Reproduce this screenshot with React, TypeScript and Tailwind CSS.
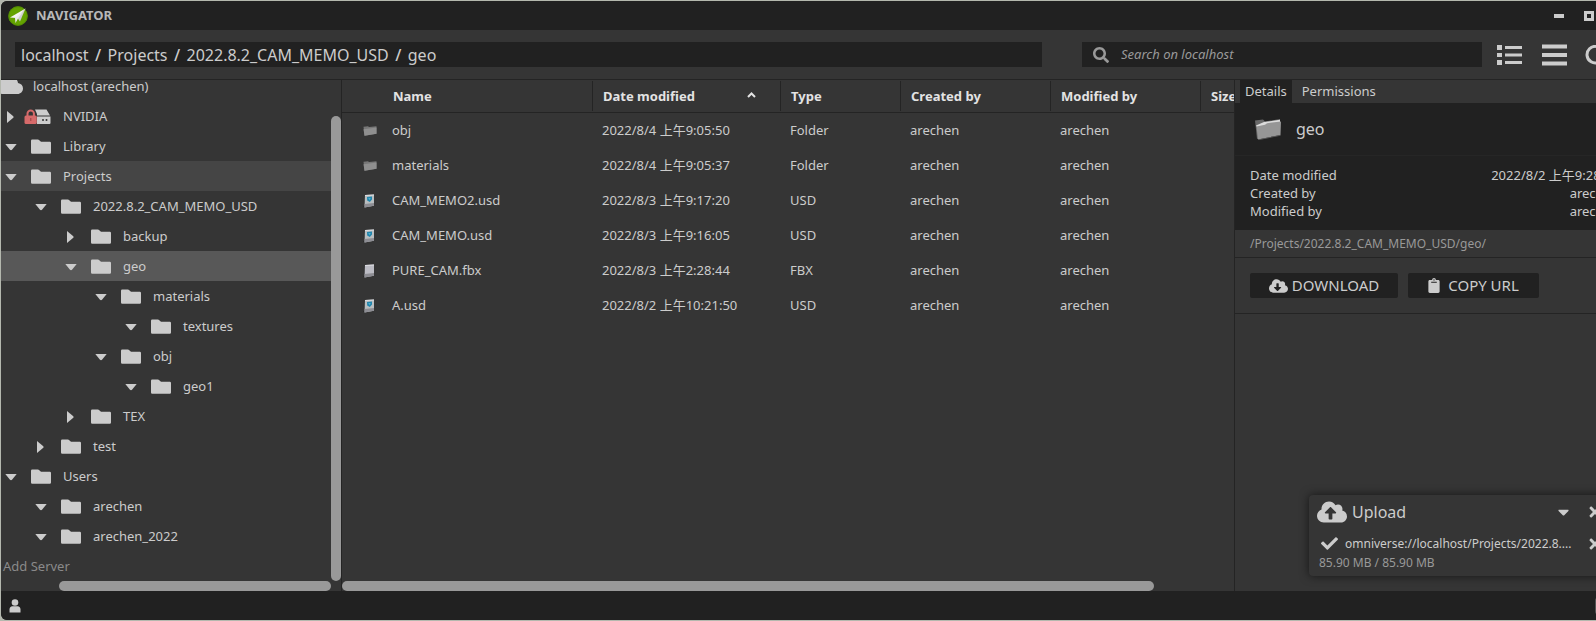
import type { ReactNode } from "react";
import { FaCaretDown, FaCheck, FaClipboard, FaCloudDownloadAlt, FaCloudUploadAlt, FaSearch, FaTimes } from "react-icons/fa";

type TreeNode = { name: string; level: number; open: boolean; icon?: "server"; state?: "hover" | "selected" };
type FileKind = "folder" | "usd" | "fbx";

const tree: TreeNode[] = [
  { name: "NVIDIA", level: 0, open: false, icon: "server" },
  { name: "Library", level: 0, open: true },
  { name: "Projects", level: 0, open: true, state: "hover" },
  { name: "2022.8.2_CAM_MEMO_USD", level: 1, open: true },
  { name: "backup", level: 2, open: false },
  { name: "geo", level: 2, open: true, state: "selected" },
  { name: "materials", level: 3, open: true },
  { name: "textures", level: 4, open: true },
  { name: "obj", level: 3, open: true },
  { name: "geo1", level: 4, open: true },
  { name: "TEX", level: 2, open: false },
  { name: "test", level: 1, open: false },
  { name: "Users", level: 0, open: true },
  { name: "arechen", level: 1, open: true },
  { name: "arechen_2022", level: 1, open: true }
];

const indents = ["pl-[3px]", "pl-[33px]", "pl-[63px]", "pl-[93px]", "pl-[123px]"];

const files: { name: string; kind: FileKind; date: string; type: string }[] = [
  { name: "obj", kind: "folder", date: "2022/8/4 上午9:05:50", type: "Folder" },
  { name: "materials", kind: "folder", date: "2022/8/4 上午9:05:37", type: "Folder" },
  { name: "CAM_MEMO2.usd", kind: "usd", date: "2022/8/3 上午9:17:20", type: "USD" },
  { name: "CAM_MEMO.usd", kind: "usd", date: "2022/8/3 上午9:16:05", type: "USD" },
  { name: "PURE_CAM.fbx", kind: "fbx", date: "2022/8/3 上午2:28:44", type: "FBX" },
  { name: "A.usd", kind: "usd", date: "2022/8/2 上午10:21:50", type: "USD" }
];

const crumbs = ["localhost", "Projects", "2022.8.2_CAM_MEMO_USD", "geo"];

const details = [
  ["Date modified", "2022/8/2 上午9:28:44"],
  ["Created by", "arechen"],
  ["Modified by", "arechen"]
];

function Logo() {
  return (
    <svg className="h-5 w-5" viewBox="0 0 20 20" aria-hidden="true">
      <circle cx="10" cy="10" r="9.7" fill="#64a300" />
      <circle cx="10" cy="10" r="9.3" fill="none" stroke="#4f8606" strokeWidth="0.8" />
      <path d="M17.5 2.500 2 11.500l6.500.5z" fill="#f4f4f4" />
      <path d="M17.500 2.500 9.500 12l2.500 3.500z" fill="#cfcfcf" />
      <path d="M17.500 2.500 7 11.900 7.500 17l2.500-4.500z" fill="#ececec" />
    </svg>
  );
}

function Arrow({ open }: { open: boolean }) {
  return (
    <svg className="h-4 w-4 shrink-0" viewBox="0 0 16 16" fill="#ccc" aria-hidden="true">
      {open ? <path d="M1.3 5h11.4L8 10.800c-.5.6-1.500.6-2 0z" /> : <path d="M3 2v12l6.300-5.300c.4-.4.4-1 0-1.400z" />}
    </svg>
  );
}

function FolderIcon() {
  return (
    <svg className="h-4 w-5 shrink-0" viewBox="0 0 20 16" fill="#ccc" aria-hidden="true">
      <path d="M1.200.500H7l1 .500 2 1.700h8.800A1.200 1.200 0 0 1 20 3.900v9.700a1.200 1.200 0 0 1-1.200 1.200H1.200A1.200 1.200 0 0 1 0 13.600V1.700A1.200 1.200 0 0 1 1.200.5z" />
    </svg>
  );
}

function LockedServerIcon() {
  return (
    <svg className="h-4 w-[27px] shrink-0" viewBox="0 0 27 16" aria-hidden="true">
      <path d="M11 .500h11.500L26 6.500H13V5z" fill="#ccc" />
      <path d="M13 7.500h13.500V14a1 1 0 0 1-1 1H13z" fill="#ccc" />
      <circle cx="19" cy="11" r="1" fill="#333" />
      <circle cx="22.500" cy="11" r="1" fill="#333" />
      <path d="M3.500 7.500V4.600a3.200 3.200 0 0 1 6.400 0V7.500" fill="none" stroke="#d66a6a" strokeWidth="2" />
      <rect x="0.500" y="6.500" width="12.300" height="8.500" rx="1.500" fill="#d66a6a" />
      <path d="M6.700 9v3" stroke="#a94d4d" strokeWidth="1.400" />
    </svg>
  );
}

function FolderShape() {
  return (
    <>
      <path d="M1 2.500 9 1.500l2 2L26 1v14L3 21z" fill="#696969" />
      <path d="M2 7.500 10 4l16-2.200V6L4 11z" fill="#dcdcdc" />
      <path d="M2.500 8.500 11 6.800l2-1.600L27 3.500 26.500 17 4 21.500z" fill="#969696" />
      <path d="m4 21.500 22.500-4.500v.8L5 22z" fill="#606060" />
    </>
  );
}

function FileIcon({ kind }: { kind: FileKind }) {
  if (kind === "folder") {
    return (
      <svg className="h-3 w-[14px]" viewBox="0 0 28 23" aria-hidden="true">
        <path d="M1 3 10 2l2 1.500L27 2v15L3 21z" fill="#777" />
        <path d="M1 8 27 4.500V17L3 21z" fill="#8f8f8f" />
      </svg>
    );
  }
  return (
    <svg className="h-[14px] w-3" viewBox="0 0 12 14" aria-hidden="true">
      <path d="M0 12.500 2 11v2.500z" fill="#222" />
      <path d="M2 1 11 .500v11.300L1.500 13.500z" fill={kind === "usd" ? "#b9bec0" : "#bcbcc4"} />
      <path d="M2 1 11 .500v1L2 2z" fill="#dedee2" />
      <path d="m1.600 10 9.400-1v2.800l-9.500 1.700z" fill="#8d8d93" />
      {kind === "usd" && <path d="m4 3 5-.400v3L6.800 8 4.200 6.500z" fill="#2186ad" />}
      {kind === "usd" && <path d="m5.200 3.800 2.600.600-1.300 1.500z" fill="#5ab8d8" />}
    </svg>
  );
}

function HeaderCell({ children, sorted }: { children: ReactNode; sorted?: boolean }) {
  return (
    <th scope="col" aria-sort={sorted ? "descending" : undefined} className="h-8 p-0 py-px text-left">
      <button type="button" className="flex h-[30px] w-full items-center justify-between border-r border-[#242424] pt-px pr-6 pl-[10px] font-bold whitespace-nowrap text-[#e3e3e3]">
        {children}
        {sorted && (
          <svg className="mb-1 h-[6px] w-[9px]" viewBox="0 0 9 6" fill="none" stroke="#e3e3e3" strokeWidth="2" aria-hidden="true">
            <path d="m1 5 3.500-3.500L8 5" />
          </svg>
        )}
      </button>
    </th>
  );
}

function TitleBar() {
  return (
    <header className="flex h-[29px] shrink-0 items-center rounded-tl-md bg-[#212121] pl-[7px]">
      <Logo />
      <h1 className="ml-2 flex-1 pt-px text-[13px] font-bold text-[#b8b8b8]">NAVIGATOR</h1>
      <button type="button" aria-label="Minimize" className="mr-5 w-[10px] py-1">
        <span className="block h-1 bg-[#ccc]" />
      </button>
      <button type="button" aria-label="Maximize" className="mr-5 h-[10px] w-[10px] border-[3px] border-[#ccc]" />
      <button type="button" aria-label="Close" className="mr-2 text-xs text-[#ccc]"><FaTimes /></button>
    </header>
  );
}

function Toolbar() {
  return (
    <div className="flex h-[50px] shrink-0 items-center border-b border-[#242424] pr-[27px] pl-[14px]">
      <nav aria-label="Path" className="flex h-[25px] flex-1 items-center bg-[#212121] pl-[6px] text-base">
        {crumbs.map((crumb, i) => (
          <span key={crumb} className="flex">
            {i > 0 && <span className="w-[19px] text-center font-medium">/</span>}
            <a href="#">{crumb}</a>
          </span>
        ))}
      </nav>
      <label className="ml-10 flex h-[25px] w-[400px] items-center gap-3 bg-[#212121] pl-[11px]">
        <FaSearch className="h-4 w-4 text-[#999]" />
        <input type="text" aria-label="Search" placeholder="Search on localhost" className="flex-1 bg-transparent pt-px text-[13px] italic outline-none placeholder:text-[#999]" />
      </label>
      <div className="ml-[15px] flex items-center">
        <button type="button" aria-label="List view" className="mr-5">
          <svg className="h-5 w-[25px]" viewBox="0 0 25 20" fill="#ccc" aria-hidden="true">
            <path d="M0 0h5v5H0zM0 8h5v4H0zM0 15h5v5H0zM8 1h17v3H8zM8 8.500h17v3H8zM8 16h17v3H8z" />
          </svg>
        </button>
        <button type="button" aria-label="Menu" className="mr-[18px]">
          <svg className="h-[22px] w-[25px]" viewBox="0 0 25 22" fill="#ccc" aria-hidden="true">
            <path d="M0 .500h25v4H0zM0 9h25v4H0zM0 17.500h25v4H0z" />
          </svg>
        </button>
        <button type="button" aria-label="Refresh">
          <svg className="h-5 w-[22px]" viewBox="0 0 22 20" fill="none" stroke="#ccc" strokeWidth="3" aria-hidden="true">
            <path d="M17.500 5.500A8.300 8.300 0 1 0 18.300 12" />
            <path d="M19 1v6h-6" />
          </svg>
        </button>
      </div>
    </div>
  );
}

function Sidebar() {
  return (
    <aside className="flex w-[341px] shrink-0 flex-col border-r border-[#242424]">
      <div className="flex min-h-0 flex-1">
        <div className="min-w-0 flex-1 overflow-hidden">
          <ul className="-mt-[9px]">
            <li>
              <button type="button" className="flex h-[30px] w-full items-center gap-[10px] pt-[2px] text-left">
                <svg className="h-4 w-[22px]" viewBox="0 0 22 16" fill="#ccc" aria-hidden="true">
                  <path d="M-3 4C-2 1 2-1 6-1h6c3 0 4.500 2 5 5 3 .5 5 2.500 5 5.500S19.500 15 16.500 15H2C-1 15-3 13.500-3 11z" />
                </svg>
                localhost (arechen)
              </button>
            </li>
            {tree.map((node) => (
              <li key={node.name} className={node.state === "selected" ? "bg-[#585858]" : node.state === "hover" ? "bg-[#454545]" : ""}>
                <button type="button" className={`flex h-[30px] w-full items-center pt-[2px] text-left ${indents[node.level]}`}>
                  <Arrow open={node.open} />
                  <span className="mr-3 flex w-[31px] shrink-0 justify-end">{node.icon === "server" ? <LockedServerIcon /> : <FolderIcon />}</span>
                  {node.name}
                </button>
              </li>
            ))}
            <li>
              <button type="button" className="flex h-[30px] items-center pt-[2px] pl-[2px] text-[#8a8a8a]">Add Server</button>
            </li>
          </ul>
        </div>
        <div className="w-[10px] pt-9">
          <div className="h-full rounded-full bg-[#999]" />
        </div>
      </div>
      <div className="h-[10px] pr-[10px] pl-[58px]">
        <div className="h-full rounded-full bg-[#999]" />
      </div>
    </aside>
  );
}

function FileList() {
  return (
    <main className="flex min-w-0 flex-1 flex-col">
      <div className="min-h-0 flex-1 overflow-hidden">
        <table className="w-[1010px] table-fixed border-collapse">
          <colgroup>
            <col className="w-[41px]" />
            <col className="w-[210px]" />
            <col className="w-[188px]" />
            <col className="w-[120px]" />
            <col className="w-[150px]" />
            <col className="w-[150px]" />
            <col />
          </colgroup>
          <thead>
            <tr className="border-b border-[#242424]">
              <td />
              <HeaderCell>Name</HeaderCell>
              <HeaderCell sorted>Date modified</HeaderCell>
              <HeaderCell>Type</HeaderCell>
              <HeaderCell>Created by</HeaderCell>
              <HeaderCell>Modified by</HeaderCell>
              <HeaderCell>Size</HeaderCell>
            </tr>
          </thead>
          <tbody>
            {files.map((file) => (
              <tr key={file.name} className="h-[35px]">
                <td className="p-0 pt-px pl-[21px]"><FileIcon kind={file.kind} /></td>
                <td className="p-0 pt-px pl-[9px]">{file.name}</td>
                <td className="p-0 pt-px pl-[9px]">{file.date}</td>
                <td className="p-0 pt-px pl-[9px]">{file.type}</td>
                <td className="p-0 pt-px pl-[9px]">arechen</td>
                <td className="p-0 pt-px pl-[9px]">arechen</td>
                <td />
              </tr>
            ))}
          </tbody>
        </table>
      </div>
      <div className="h-[10px] pr-20">
        <div className="h-full rounded-full bg-[#999]" />
      </div>
    </main>
  );
}

function DetailsPanel() {
  return (
    <section aria-label="Details" className="w-[400px] shrink-0 border-l border-[#242424]">
      <div role="tablist" className="flex h-[23px] pl-[5px] text-[13px]">
        <button type="button" role="tab" aria-selected="true" className="bg-[#212121] px-[5px]">Details</button>
        <button type="button" role="tab" aria-selected="false" className="px-[10px]">Permissions</button>
      </div>
      <div className="bg-[#212121]">
        <div className="flex h-[53px] items-center gap-[14px] border-b border-[#262626] pl-[19px] text-base">
          <svg className="h-[23px] w-7" viewBox="0 0 28 23" aria-hidden="true">
            <FolderShape />
          </svg>
          <h2>geo</h2>
        </div>
        <dl className="px-[15px] pt-[10px] pb-[10px]">
          {details.map(([label, value]) => (
            <div key={label} className="flex justify-between leading-[18px]">
              <dt>{label}</dt>
              <dd>{value}</dd>
            </div>
          ))}
        </dl>
      </div>
      <p className="flex h-7 items-center border-b border-[#242424] pl-[15px] text-xs text-[#999]">/Projects/2022.8.2_CAM_MEMO_USD/geo/</p>
      <div className="flex h-14 items-center gap-[10px] border-b border-[#242424] pl-[15px] text-[15px]">
        <button type="button" className="flex h-[25px] w-[148px] items-center justify-center gap-1 rounded-xs bg-[#212121]">
          <FaCloudDownloadAlt className="h-[18px] w-[19px]" />
          DOWNLOAD
        </button>
        <button type="button" className="flex h-[25px] w-[131px] items-center justify-center gap-2 rounded-xs bg-[#212121]">
          <FaClipboard className="h-[15px] w-3" />
          COPY URL
        </button>
      </div>
    </section>
  );
}

function UploadToast() {
  return (
    <div role="status" className="absolute right-[15px] bottom-[15px] w-[310px] rounded bg-[#353535] shadow-[0_0_10px_rgba(0,0,0,0.6)]">
      <div className="flex h-[34px] items-center pr-3 pl-2">
        <FaCloudUploadAlt className="h-[30px] w-[30px]" />
        <span className="ml-[5px] flex-1 text-base">Upload</span>
        <button type="button" aria-label="Collapse" className="mr-[18px]"><FaCaretDown className="h-5 w-[11px]" /></button>
        <button type="button" aria-label="Close" className="w-5"><FaTimes className="h-4 w-4" /></button>
      </div>
      <div className="flex h-[29px] items-center pr-3 pl-3">
        <FaCheck className="h-[17px] w-[17px]" />
        <span className="ml-[7px] flex-1 text-xs">omniverse://localhost/Projects/2022.8....</span>
        <button type="button" aria-label="Dismiss" className="w-5"><FaTimes className="h-4 w-4" /></button>
      </div>
      <p className="h-[18px] pl-[10px] text-xs leading-[10px] text-[#999]">85.90 MB / 85.90 MB</p>
    </div>
  );
}

export default function App() {
  return (
    <div className="h-screen overflow-hidden bg-[#b4b8ae] py-px pl-px font-['Noto_Sans','Noto_Sans_CJK_TC',sans-serif] text-[13px] text-[#ccc]">
      <div className="flex h-full w-[calc(100%+38px)] flex-col rounded-l-md bg-[#353535]">
        <TitleBar />
        <Toolbar />
        <div className="relative flex min-h-0 flex-1">
          <Sidebar />
          <FileList />
          <DetailsPanel />
          <UploadToast />
        </div>
        <footer className="flex h-[29px] shrink-0 items-center justify-between rounded-bl-md bg-[#212121] pr-[15px] pl-2">
          <button type="button" aria-label="Account">
            <svg className="h-[14px] w-3" viewBox="0 0 12 14" fill="#ccc" aria-hidden="true">
              <circle cx="6" cy="3.500" r="3.300" />
              <path d="M.500 13.500V10.500Q.500 7.500 3.500 7.200h5q3 .3 3 3.300v3z" />
            </svg>
          </button>
          <span className="h-[18px] w-6 rounded bg-[#555]" />
        </footer>
      </div>
    </div>
  );
}
